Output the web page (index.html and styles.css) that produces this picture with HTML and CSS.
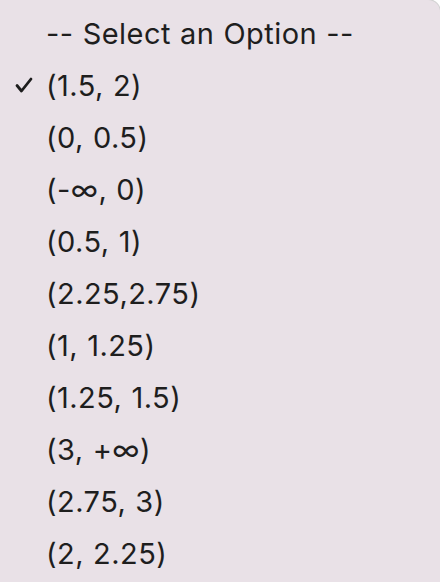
FILE: index.html
```html
<!DOCTYPE html>
<html>
<head>
<meta charset="utf-8">
<link rel="stylesheet" href="styles.css">
</head>
<body>
<div class="menu">
  <div class="item"><span class="mark"></span><span class="label">-- Select an Option --</span></div>
  <div class="item selected"><span class="mark"><svg viewBox="0 0 18 16" width="18" height="16"><polyline points="2,8.5 6.5,14 16,2" fill="none" stroke="#1d1d1d" stroke-width="2.8" stroke-linecap="round" stroke-linejoin="round"/></svg></span><span class="label">(1.5, 2)</span></div>
  <div class="item"><span class="mark"></span><span class="label">(0, 0.5)</span></div>
  <div class="item"><span class="mark"></span><span class="label">(-∞, 0)</span></div>
  <div class="item"><span class="mark"></span><span class="label">(0.5, 1)</span></div>
  <div class="item"><span class="mark"></span><span class="label">(2.25,2.75)</span></div>
  <div class="item"><span class="mark"></span><span class="label">(1, 1.25)</span></div>
  <div class="item"><span class="mark"></span><span class="label">(1.25, 1.5)</span></div>
  <div class="item"><span class="mark"></span><span class="label">(3, +∞)</span></div>
  <div class="item"><span class="mark"></span><span class="label">(2.75, 3)</span></div>
  <div class="item"><span class="mark"></span><span class="label">(2, 2.25)</span></div>
</div>
</body>
</html>
```
FILE: styles.css
```css
html, body {
  margin: 0;
  padding: 0;
  background: #ffffff;
}
.menu {
  width: 440px;
  height: 582px;
  box-sizing: border-box;
  padding-top: 7px;
  background: #e9e1e7;
  border-top-right-radius: 12px;
  box-shadow: 0 0 0 1px rgba(0,0,0,0.18);
  overflow: hidden;
  font-family: Inter, "Noto Sans", sans-serif;
  font-size: 29px;
  letter-spacing: 0.45px;
  word-spacing: 0.5px;
  color: #1e1e1e;
}
.item {
  height: 52px;
  display: flex;
  align-items: center;
}
.mark {
  width: 46px;
  flex: none;
  display: flex;
  justify-content: flex-end;
  padding-right: 13px;
  box-sizing: border-box;
}
.mark svg {
  display: block;
}
.label {
  white-space: nowrap;
}
```
